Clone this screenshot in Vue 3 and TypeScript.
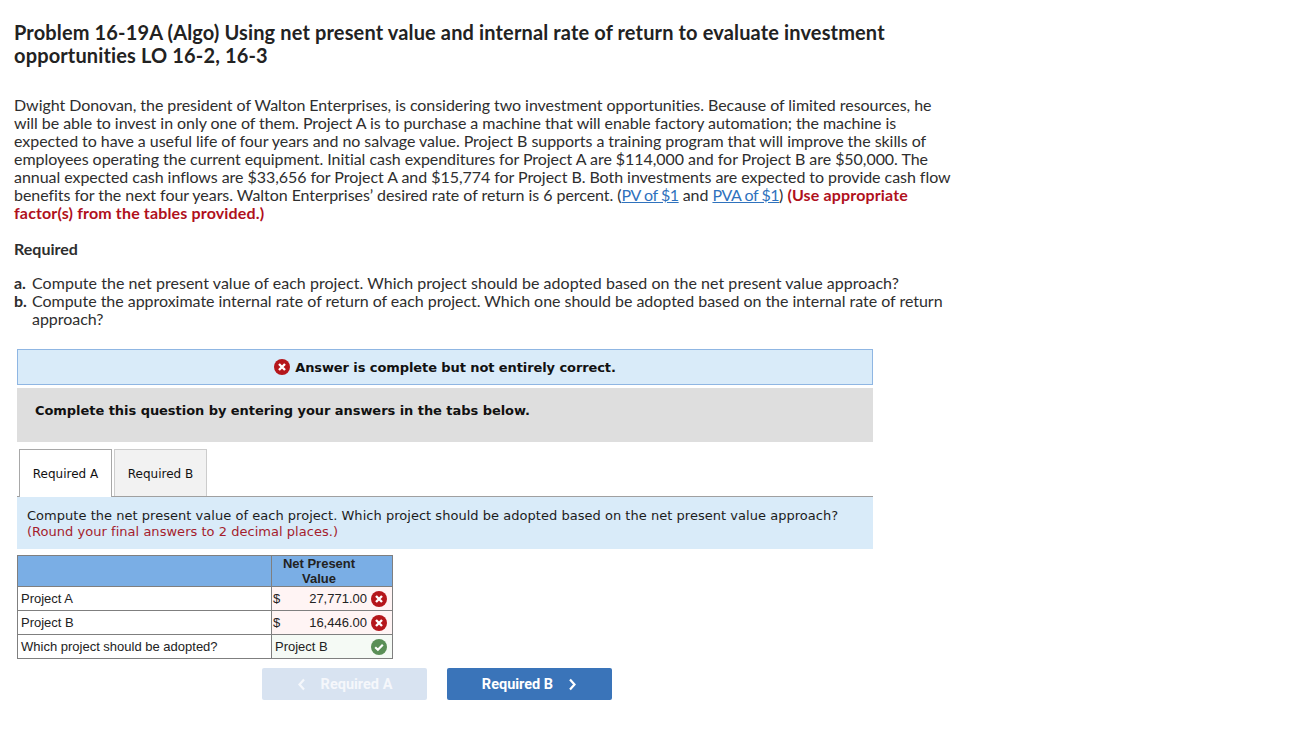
<script setup lang="ts">
interface Row { label: string; value: string; ok: boolean; money: boolean }
const rows: Row[] = [
  { label: 'Project A', value: '27,771.00', ok: false, money: true },
  { label: 'Project B', value: '16,446.00', ok: false, money: true },
  { label: 'Which project should be adopted?', value: 'Project B', ok: true, money: false },
]
</script>

<template>
  <main class="page">
    <h1 class="title">Problem 16-19A (Algo) Using net present value and internal rate of return to evaluate investment<br>opportunities LO 16-2, 16-3</h1>
    <p class="body">Dwight Donovan, the president of Walton Enterprises, is considering two investment opportunities. Because of limited resources, he<br>will be able to invest in only one of them. Project A is to purchase a machine that will enable factory automation; the machine is<br>expected to have a useful life of four years and no salvage value. Project B supports a training program that will improve the skills of<br>employees operating the current equipment. Initial cash expenditures for Project A are $114,000 and for Project B are $50,000. The<br>annual expected cash inflows are $33,656 for Project A and $15,774 for Project B. Both investments are expected to provide cash flow<br>benefits for the next four years. Walton Enterprises’ desired rate of return is 6 percent. (<a class="link">PV of $1</a> and <a class="link">PVA of $1</a>) <b class="red">(Use appropriate<br>factor(s) from the tables provided.)</b></p>
    <h2 class="required">Required</h2>
    <div class="list">
      <div class="item"><b>a.</b><span>Compute the net present value of each project. Which project should be adopted based on the net present value approach?</span></div>
      <div class="item"><b>b.</b><span>Compute the approximate internal rate of return of each project. Which one should be adopted based on the internal rate of return<br>approach?</span></div>
    </div>

    <section class="work">
      <div class="alert">
        <svg class="ic" viewBox="0 0 16 16"><circle cx="8" cy="8" r="8" fill="#b5161b"/><path d="M5 5l6 6M11 5l-6 6" stroke="#fff" stroke-width="2.4" fill="none"/></svg>
        <span>Answer is complete but not entirely correct.</span>
      </div>
      <div class="instruction">Complete this question by entering your answers in the tabs below.</div>
      <div class="tabs">
        <div class="tab active">Required A</div>
        <div class="tab">Required B</div>
      </div>
      <div class="prompt">Compute the net present value of each project. Which project should be adopted based on the net present value approach?<br><span class="round">(Round your final answers to 2 decimal places.)</span></div>

      <table class="grid">
        <thead>
          <tr><th class="c1"></th><th class="c2 head">Net Present<br>Value</th></tr>
        </thead>
        <tbody>
          <tr v-for="r in rows" :key="r.label">
            <td class="c1 name">{{ r.label }}</td>
            <td class="c2 val" :class="r.ok ? 'good' : 'bad'">
              <div class="cell">
                <span v-if="r.money">$</span>
                <span :class="r.money ? 'num' : 'word'">{{ r.value }}</span>
                <svg v-if="r.ok" class="ic" viewBox="0 0 16 16"><circle cx="8" cy="8" r="8" fill="#5a8f57"/><path d="M4.2 8.300l2.700 2.400 4.900-5" stroke="#fff" stroke-width="2.200" fill="none"/></svg>
                <svg v-else class="ic" viewBox="0 0 16 16"><circle cx="8" cy="8" r="8" fill="#b5161b"/><path d="M5 5l6 6M11 5l-6 6" stroke="#fff" stroke-width="2.400" fill="none"/></svg>
              </div>
            </td>
          </tr>
        </tbody>
      </table>

      <div class="nav">
        <button class="btn off"><svg class="chev" viewBox="0 0 9 13"><path d="M7 1.500L2.500 6.500 7 11.500" stroke="currentColor" stroke-width="2.200" fill="none"/></svg>Required A</button>
        <button class="btn on">Required B<svg class="chev" viewBox="0 0 9 13"><path d="M2 1.500L6.500 6.500 2 11.500" stroke="currentColor" stroke-width="2.200" fill="none"/></svg></button>
      </div>
    </section>
  </main>
</template>

<style scoped>
.page { padding: 21px 0 0 14px; color: #2e2e2e; font-family: "Lato", "Open Sans", sans-serif; width: 1000px; }
.title { margin: 0; font-size: 20px; line-height: 23px; font-weight: 700; letter-spacing: .14px; color: #222; white-space: nowrap; }
.body { margin: 29px 0 0; font-size: 16px; line-height: 18px; letter-spacing: -.05px; white-space: nowrap; }
.link { color: #2f72bd; text-decoration: underline; letter-spacing: -.45px; }
.red { color: #b0101c; letter-spacing: .15px; }
.required { margin: 18px 0 0; font-size: 16px; line-height: 18px; font-weight: 700; }
.list { margin-top: 16px; font-size: 16px; line-height: 18px; white-space: nowrap; }
.item { display: flex; }
.item:first-child span { letter-spacing: .04px; }
.item:last-child span { letter-spacing: -.03px; }
.item b { width: 18px; flex: none; }
.work { margin: 21px 0 0 3px; width: 856px; font-family: "DejaVu Sans", Verdana, sans-serif; }
.alert { height: 36px; box-sizing: border-box; border: 1px solid #8fb6e3; background: #d9ebf9; display: flex; align-items: center; justify-content: center; gap: 5px; font-size: 13px; font-weight: 700; letter-spacing: -.09px; color: #111; }
.ic { width: 16px; height: 16px; flex: none; }
.instruction { margin-top: 3px; height: 54px; box-sizing: border-box; padding: 15px 18px 0; background: #dedede; font-size: 13px; line-height: 16px; font-weight: 700; letter-spacing: -.05px; color: #111; }
.tabs { margin-top: 7px; padding-left: 2px; height: 47px; display: flex; gap: 2px; border-bottom: 1px solid #a0a0a0; font-size: 12px; }
.tab { width: 91px; height: 46px; line-height: 48px; text-align: center; border: 1px solid #ccc; border-bottom: 0; background: #f2f2f2; color: #111; }
.tab.active { background: #fff; border-color: #a8a8a8; height: 47px; }
.prompt { height: 52px; box-sizing: border-box; padding: 11px 10px 0; background: #d9ebf9; font-size: 13px; line-height: 16px; letter-spacing: .03px; color: #1c1c1c; white-space: nowrap; }
.round { color: #a51d2d; }
.grid { margin-top: 6px; border-collapse: collapse; width: 376px; table-layout: fixed; font-family: "Liberation Sans", Arial, sans-serif; font-size: 13px; color: #222; }
.grid th, .grid td { border: 1px solid #7f7f7f; padding: 0; }
.grid th { background: #7aaee5; height: 30px; font-size: 13px; line-height: 15px; font-weight: 700; }
.grid td { height: 23px; }
.grid .head { padding-right: 26px; }
.c1 { width: 253px; }
.grid .name { padding-left: 3px; width: 250px; }
.cell { display: flex; align-items: center; padding: 0 5px 0 1px; }
.num { margin-left: auto; margin-right: 4px; }
.word { margin-left: 2px; margin-right: auto; }
.bad { background: #fff4f4; }
.good { background: #f5faf5; }
.nav { margin-top: 9px; padding-left: 245px; display: flex; gap: 20px; }
.btn { width: 165px; height: 32px; border: 0; border-radius: 2px; font-family: "Roboto", sans-serif; font-size: 14.500px; font-weight: 700; color: #fff; display: flex; align-items: center; justify-content: center; gap: 15px; padding: 0; }
.btn.on { background: #3a74b9; }
.btn.off { background: #d8e3f1; color: #f5f7fb; }
.chev { width: 9px; height: 13px; }
</style>
